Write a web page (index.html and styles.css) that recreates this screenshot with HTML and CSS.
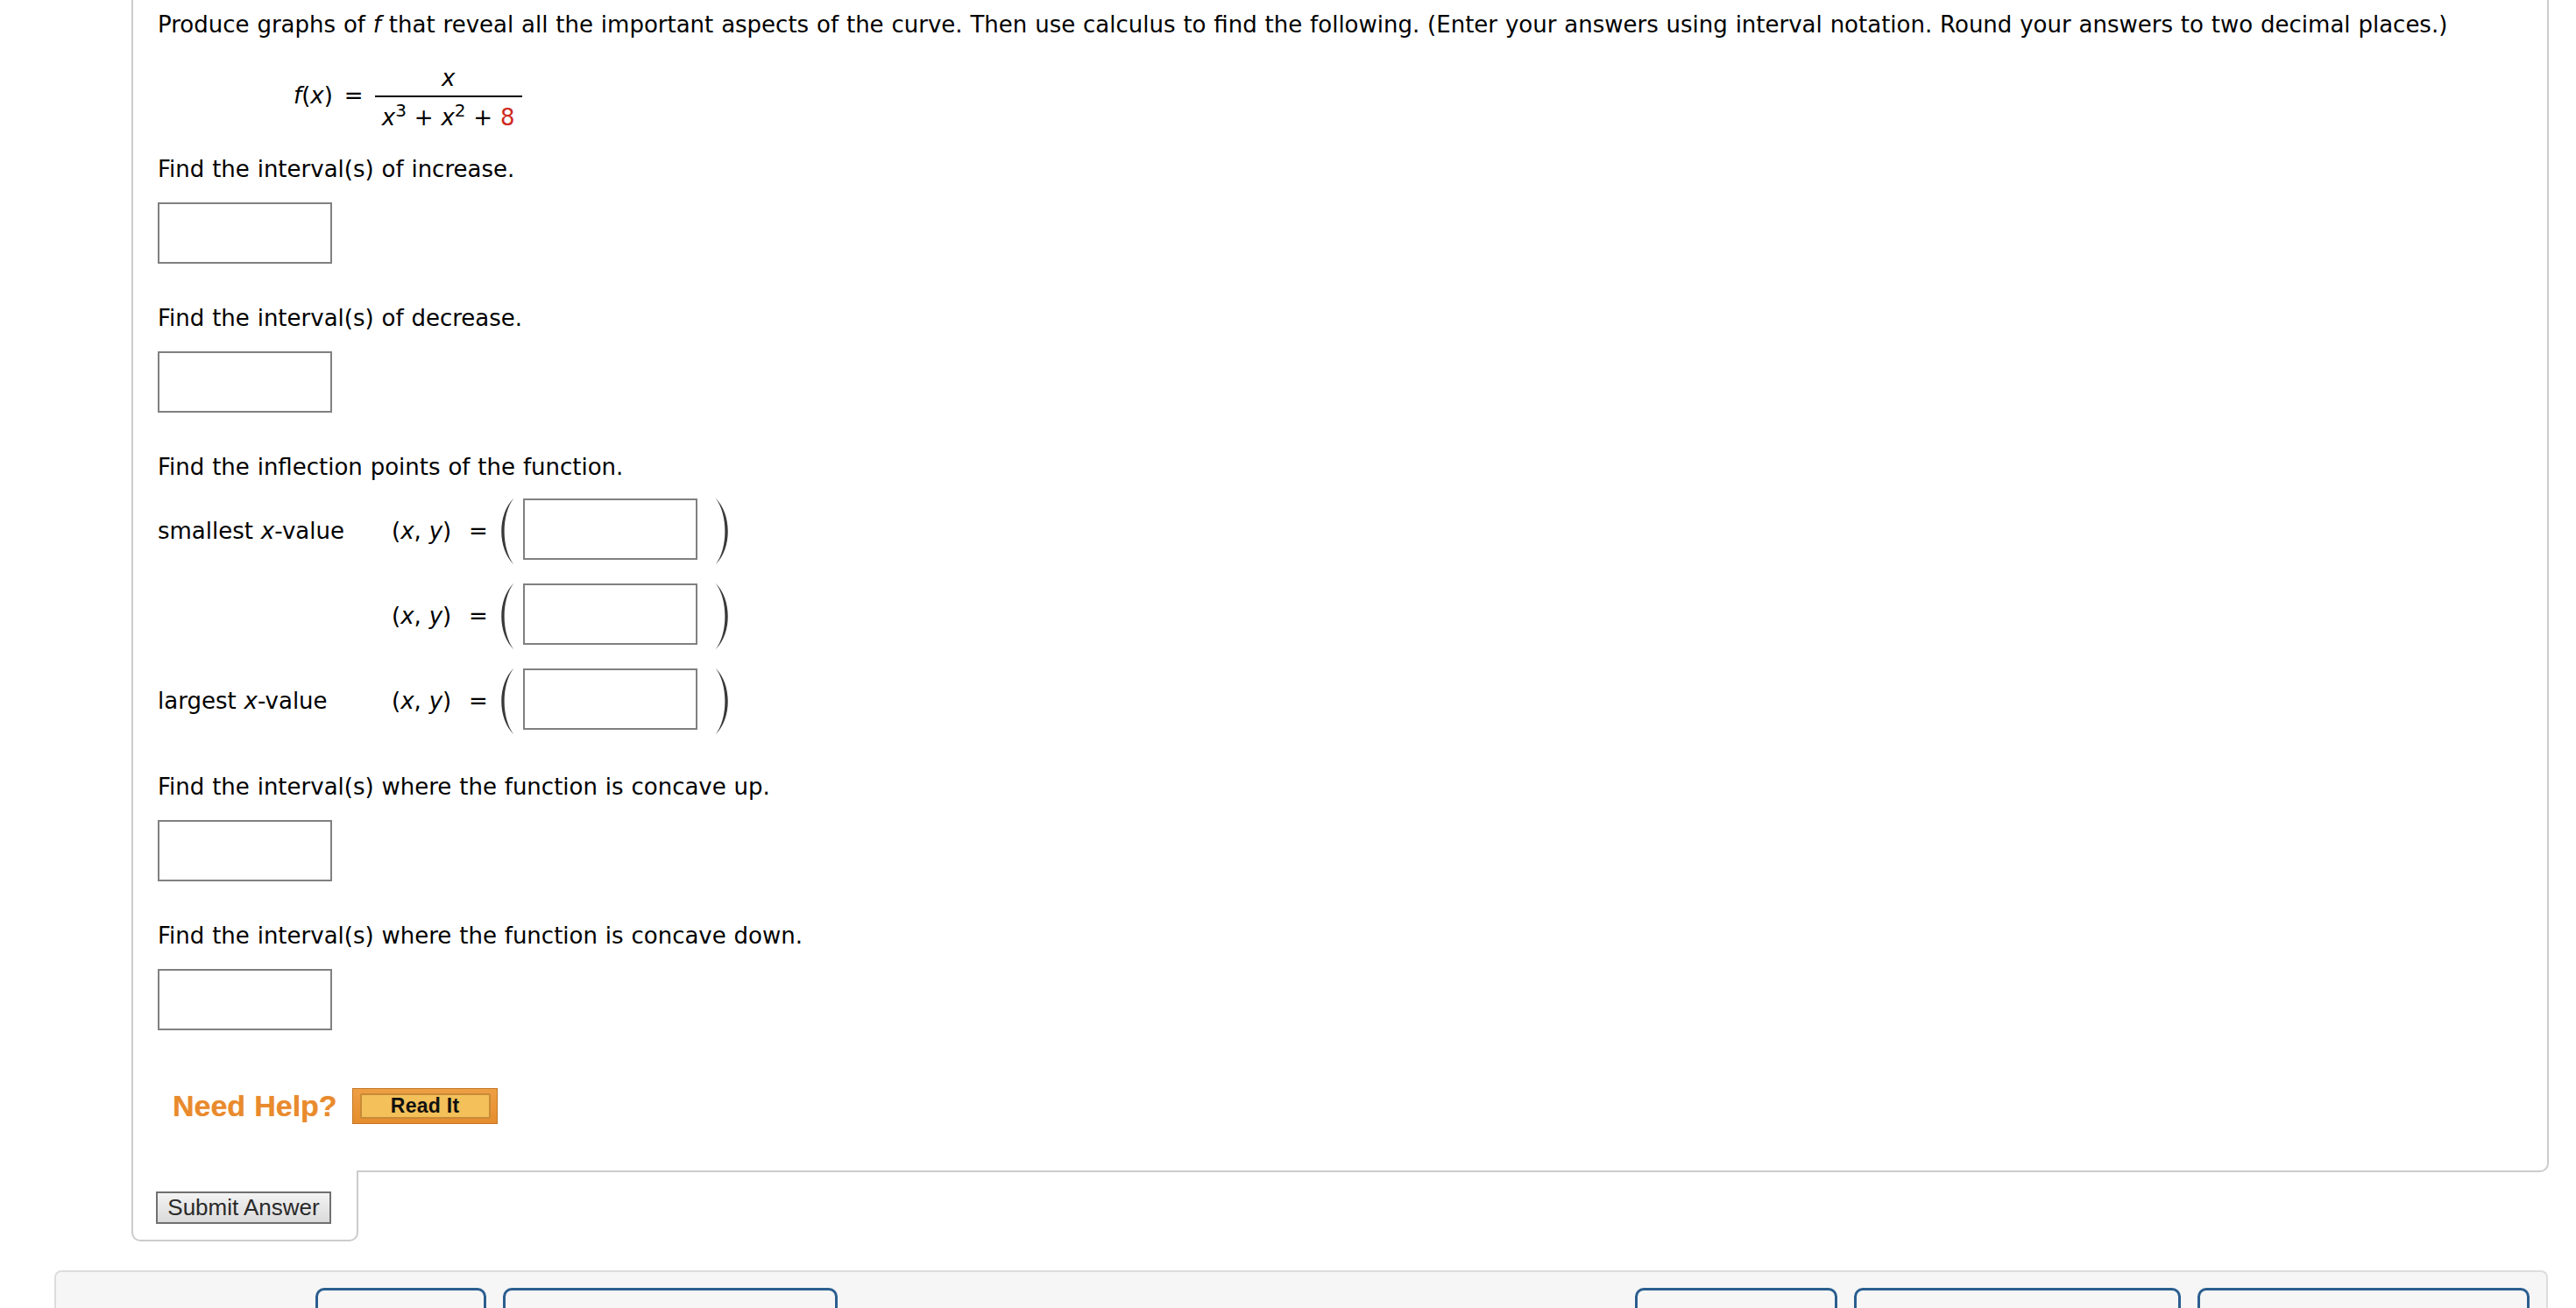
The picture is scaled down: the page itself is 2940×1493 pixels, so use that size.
FILE: index.html
```html
<!DOCTYPE html>
<html lang="en">
<head>
<meta charset="utf-8">
<title>Question</title>
<link rel="stylesheet" href="styles.css">
</head>
<body>
<div class="page">
  <div class="question">
    <p class="line">Produce graphs of <i>f</i> that reveal all the important aspects of the curve. Then use calculus to find the following. (Enter your answers using interval notation. Round your answers to two decimal places.)</p>

    <div class="formula">
      <span class="lhs"><i>f</i>(<i>x</i>)</span>
      <span class="eqsign">=</span>
      <span class="frac">
        <span class="num"><i>x</i></span>
        <span class="bar"></span>
        <span class="den"><i>x</i><sup>3</sup> + <i>x</i><sup>2</sup> + <span class="red">8</span></span>
      </span>
    </div>

    <p class="line gap-a">Find the interval(s) of increase.</p>
    <div class="field-row"><span class="field"></span></div>

    <p class="line gap-b">Find the interval(s) of decrease.</p>
    <div class="field-row"><span class="field"></span></div>

    <p class="line gap-b">Find the inflection points of the function.</p>
    <div class="ip-list">
      <div class="ip-row">
        <span class="ip-label">smallest <i>x</i>-value</span>
        <span class="xy">(<i>x</i>, <i>y</i>)</span>
        <span class="eq">=</span>
        <svg class="paren" viewBox="0 0 16 77" width="16" height="77"><path d="M15.5 0.5 C-3.5 19 -3.5 58 15.5 76.5 C1 58 1 19 15.5 0.5 Z"/></svg>
        <span class="field"></span>
        <svg class="paren paren-r" viewBox="0 0 16 77" width="16" height="77"><path d="M0.5 0.5 C19.5 19 19.5 58 0.5 76.5 C15 58 15 19 0.5 0.5 Z"/></svg>
      </div>
      <div class="ip-row">
        <span class="ip-label"></span>
        <span class="xy">(<i>x</i>, <i>y</i>)</span>
        <span class="eq">=</span>
        <svg class="paren" viewBox="0 0 16 77" width="16" height="77"><path d="M15.5 0.5 C-3.5 19 -3.5 58 15.5 76.5 C1 58 1 19 15.5 0.5 Z"/></svg>
        <span class="field"></span>
        <svg class="paren paren-r" viewBox="0 0 16 77" width="16" height="77"><path d="M0.5 0.5 C19.5 19 19.5 58 0.5 76.5 C15 58 15 19 0.5 0.5 Z"/></svg>
      </div>
      <div class="ip-row">
        <span class="ip-label">largest <i>x</i>-value</span>
        <span class="xy">(<i>x</i>, <i>y</i>)</span>
        <span class="eq">=</span>
        <svg class="paren" viewBox="0 0 16 77" width="16" height="77"><path d="M15.5 0.5 C-3.5 19 -3.5 58 15.5 76.5 C1 58 1 19 15.5 0.5 Z"/></svg>
        <span class="field"></span>
        <svg class="paren paren-r" viewBox="0 0 16 77" width="16" height="77"><path d="M0.5 0.5 C19.5 19 19.5 58 0.5 76.5 C15 58 15 19 0.5 0.5 Z"/></svg>
      </div>
    </div>

    <p class="line gap-c">Find the interval(s) where the function is concave up.</p>
    <div class="field-row"><span class="field"></span></div>

    <p class="line gap-b">Find the interval(s) where the function is concave down.</p>
    <div class="field-row"><span class="field"></span></div>

    <div class="help-row">
      <span class="need-help">Need Help?</span>
      <span class="read-it"><span class="read-it-inner">Read It</span></span>
    </div>
  </div>

  <div class="submit-tab">
    <span class="submit-btn">Submit Answer</span>
  </div>

  <div class="footer-bar">
    <div class="btn-group">
      <span class="nav-btn w1"></span>
      <span class="nav-btn w2"></span>
    </div>
    <div class="btn-group">
      <span class="nav-btn w3"></span>
      <span class="nav-btn w4"></span>
      <span class="nav-btn w5"></span>
    </div>
  </div>
</div>
</body>
</html>
```

FILE: styles.css
```css
html, body {
  margin: 0;
  padding: 0;
  background: #ffffff;
}

body {
  height: 1493px;
  overflow: hidden;
  font-family: "DejaVu Sans", Verdana, sans-serif;
  font-size: 26px;
  word-spacing: 0.6px;
  color: #000000;
}

.page {
  width: 2940px;
  height: 1493px;
  overflow: hidden;
}

.question {
  margin-left: 150px;
  width: 2759px;
  box-sizing: border-box;
  border: 2px solid #cccccc;
  border-top: none;
  border-bottom-right-radius: 10px;
  padding: 13px 0 53px 28px;
  background: #ffffff;
}

.line {
  margin: 0;
  line-height: 30px;
  white-space: nowrap;
}

.gap-a { margin-top: 29px; }
.gap-b { margin-top: 47px; }
.gap-c { margin-top: 44px; }

/* formula */
.formula {
  display: flex;
  align-items: center;
  margin-top: 31px;
  margin-left: 155px;
  line-height: 30px;
}

.lhs {
  margin-top: -5px;
}

.eqsign {
  margin: -5px 13px 0 13px;
}

.frac {
  display: inline-flex;
  flex-direction: column;
  align-items: center;
  width: 168px;
}

.num {
  line-height: 30px;
  margin-bottom: 5px;
}

.bar {
  display: block;
  width: 168px;
  height: 2px;
  background: #000000;
}

.den {
  line-height: 30px;
  margin-top: 8px;
  white-space: nowrap;
}

.den sup {
  font-size: 20px;
  line-height: 0;
  vertical-align: 10px;
}

.red {
  color: #cf2a1f;
}

/* answer fields */
.field-row {
  margin-top: 23px;
  height: 70px;
}

.field {
  display: inline-block;
  width: 199px;
  height: 70px;
  box-sizing: border-box;
  border: 2px solid #808080;
  background: #ffffff;
  vertical-align: top;
}

/* inflection points */
.ip-list {
  display: flex;
  flex-direction: column;
  gap: 20px;
  margin-top: 20px;
}

.ip-row {
  display: flex;
  align-items: center;
  height: 77px;
  line-height: 30px;
}

.ip-label {
  width: 267px;
  flex: none;
  margin-top: -2px;
}

.xy {
  margin-top: -2px;
  width: 88px;
  flex: none;
}

.eq {
  margin-top: -2px;
  width: 36px;
  flex: none;
}

.paren {
  flex: none;
  fill: #3a3a3a;
  margin-right: 10px;
}

.paren-r {
  margin-right: 0;
  margin-left: 20px;
}

.ip-row .field {
  height: 70px;
  margin-top: -6px;
}

/* help */
.help-row {
  display: flex;
  align-items: center;
  margin-top: 66px;
  margin-left: 17px;
  height: 41px;
}

.need-help {
  font-family: "Liberation Sans", Arial, sans-serif;
  font-weight: bold;
  font-size: 34px;
  color: #e98a2d;
  text-shadow: 0 0 1px rgba(233, 138, 45, 0.6);
  margin-right: 17px;
}

.read-it {
  display: inline-flex;
  box-sizing: border-box;
  width: 166px;
  height: 41px;
  padding: 5px 7px 5px 8px;
  background: linear-gradient(#ee9f45, #e58d2d);
  border: 1px solid #c47623;
}

.read-it-inner {
  flex: 1;
  display: flex;
  align-items: center;
  justify-content: center;
  background: #f3c059;
  border: 2px solid #c98a36;
  border-radius: 2px;
  font-family: "Liberation Sans", Arial, sans-serif;
  font-weight: bold;
  font-size: 23px;
  color: #111111;
  letter-spacing: 0.3px;
  word-spacing: 0;
}

/* submit */
.submit-tab {
  position: relative;
  margin-left: 150px;
  margin-top: -2px;
  width: 259px;
  box-sizing: border-box;
  border: 2px solid #cccccc;
  border-top: none;
  border-radius: 0 0 10px 10px;
  background: #ffffff;
  padding: 24px 0 18px 26px;
}

.submit-btn {
  display: flex;
  align-items: center;
  justify-content: center;
  width: 200px;
  height: 37px;
  box-sizing: border-box;
  border: 2px solid #707070;
  background: linear-gradient(#f3f3f3, #dadada);
  font-family: "Liberation Sans", Arial, sans-serif;
  font-size: 26px;
  word-spacing: 0;
  color: #2a2a2a;
}

/* footer */
.footer-bar {
  margin-top: 33px;
  margin-left: 62px;
  width: 2846px;
  height: 43px;
  overflow: hidden;
  box-sizing: border-box;
  border: 2px solid #dddddd;
  border-bottom: none;
  border-radius: 8px 8px 0 0;
  background: #f6f6f6;
  padding: 18px 19px 0 296px;
  display: flex;
  justify-content: space-between;
}

.btn-group {
  display: flex;
  gap: 19px;
}

.nav-btn {
  display: block;
  flex: none;
  height: 70px;
  box-sizing: border-box;
  border: 3px solid #2b5e8f;
  border-radius: 10px;
  background: #f6f6f6;
}

.w1 { width: 195px; }
.w2 { width: 382px; }
.w3 { width: 231px; }
.w4 { width: 373px; }
.w5 { width: 379px; }
```
